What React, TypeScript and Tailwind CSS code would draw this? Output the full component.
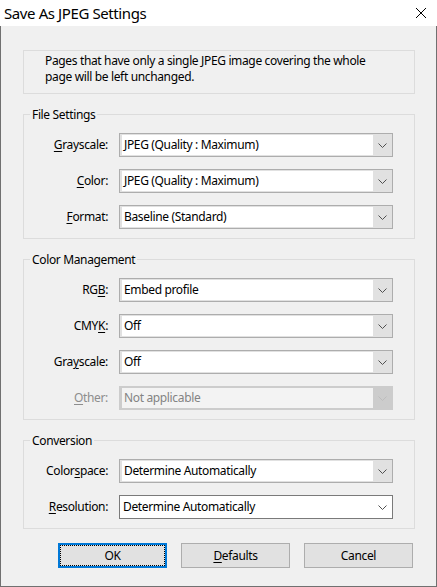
import React from "react";

type Row = {
  label: React.ReactNode;
  value: string;
  kind?: "list" | "combo" | "disabled";
};

const Key = ({ children }: { children: React.ReactNode }) => (
  <span className="underline decoration-1 underline-offset-2">{children}</span>
);

const Chevron = ({ color }: { color: string }) => (
  <svg width="9" height="5" viewBox="0 0 9 5" fill="none">
    <path d="M0.5 0.5 4.5 4.5 8.5 0.5" stroke={color} strokeWidth="1" />
  </svg>
);

function Dropdown({ value, kind = "list" }: { value: string; kind?: Row["kind"] }) {
  if (kind === "combo") {
    return (
      <div className="flex h-[24px] w-[274px] border border-[#7a7a7a] bg-white">
        <div className="flex flex-1 items-center pl-[3px] text-black">{value}</div>
        <div className="flex w-[20px] items-center justify-center">
          <Chevron color="#505050" />
        </div>
      </div>
    );
  }
  const disabled = kind === "disabled";
  return (
    <div
      className={
        disabled
          ? "flex h-[24px] w-[274px] border border-[#cccccc] bg-[#cccccc] p-[1px]"
          : "flex h-[24px] w-[274px] border border-[#adadad] bg-[#e1e1e1] p-[1px]"
      }
    >
      <div
        className={
          disabled
            ? "ml-[1px] flex flex-1 items-center bg-[#f3f3f3] pl-[2px] text-[#838383]"
            : "ml-[1px] flex flex-1 items-center bg-white pl-[2px] text-black"
        }
      >
        {value}
      </div>
      <div className="flex w-[18px] items-center justify-center pl-[1px]">
        <Chevron color={disabled ? "#bdbdbd" : "#505050"} />
      </div>
    </div>
  );
}

function Group({ title, rows }: { title: string; rows: Row[] }) {
  return (
    <fieldset className="mt-[13px] border border-[#dcdcdc] pt-[11px] pb-[9px]">
      <legend className="ml-[6px] px-[2px] leading-[15px] text-black">{title}</legend>
      <div className="flex flex-col gap-[12px]">
        {rows.map((r, i) => (
          <div key={i} className="flex items-center">
            <div
              className={
                r.kind === "disabled"
                  ? "w-[84px] text-right text-[#8d8d8d]"
                  : "w-[84px] text-right text-black"
              }
            >
              {r.label}
            </div>
            <div className="ml-[11px]">
              <Dropdown value={r.value} kind={r.kind} />
            </div>
          </div>
        ))}
      </div>
    </fieldset>
  );
}

export default function App() {
  const fileRows: Row[] = [
    { label: <><Key>G</Key>rayscale:</>, value: "JPEG (Quality : Maximum)" },
    { label: <><Key>C</Key>olor:</>, value: "JPEG (Quality : Maximum)" },
    { label: <><Key>F</Key>ormat:</>, value: "Baseline (Standard)" },
  ];
  const colorRows: Row[] = [
    { label: <>RG<Key>B</Key>:</>, value: "Embed profile" },
    { label: <>CMY<Key>K</Key>:</>, value: "Off" },
    { label: <>Gra<Key>y</Key>scale:</>, value: "Off" },
    { label: <><Key>O</Key>ther:</>, value: "Not applicable", kind: "disabled" },
  ];
  const convRows: Row[] = [
    { label: <>Color<Key>s</Key>pace:</>, value: "Determine Automatically" },
    { label: <><Key>R</Key>esolution:</>, value: "Determine Automatically", kind: "combo" },
  ];

  return (
    <div className="flex h-[587px] w-[437px] flex-col bg-[#f0f0f0] font-['Noto_Sans',sans-serif] text-[12px] tracking-[-0.35px]">
      <div className="flex h-[26px] items-center justify-between bg-white pl-[4px] pr-[11px]">
        <span className="text-[15px] tracking-[-0.4px] text-black">Save As JPEG Settings</span>
        <svg width="10" height="10" viewBox="0 0 10 10">
          <path d="M0 0 10 10 M10 0 0 10" stroke="#000" strokeWidth="1" />
        </svg>
      </div>

      <div className="flex flex-1 flex-col border-x border-b border-[#707070] pt-[24px] pl-[22px] pr-[21px]">
        <div className="h-[44px] border border-[#dcdcdc] pt-[2px] pl-[21px] leading-[16px] text-black">
          Pages that have only a single JPEG image covering the whole
          <br />
          page will be left unchanged.
        </div>

        <Group title="File Settings" rows={fileRows} />
        <Group title="Color Management" rows={colorRows} />
        <Group title="Conversion" rows={convRows} />

        <div className="mt-[14px] flex gap-[14px] pl-[35px]">
          <button className="flex h-[25px] w-[109px] border-2 border-[#0078d7] bg-[#e1e1e1]">
            <span className="flex flex-1 items-center justify-center border border-dotted border-black text-black">
              OK
            </span>
          </button>
          <button className="flex h-[25px] w-[109px] items-center justify-center border border-[#adadad] bg-[#e1e1e1] text-black">
            <Key>D</Key>efaults
          </button>
          <button className="flex h-[25px] w-[109px] items-center justify-center border border-[#adadad] bg-[#e1e1e1] text-black">
            Cancel
          </button>
        </div>
      </div>
    </div>
  );
}
